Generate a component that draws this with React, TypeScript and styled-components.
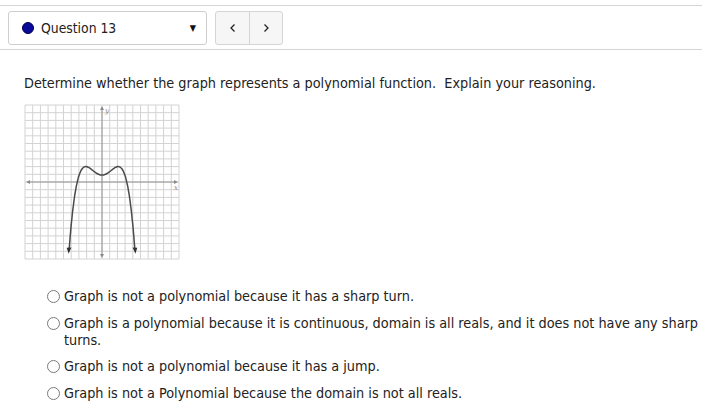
import React from 'react';
import styled, { createGlobalStyle } from 'styled-components';

const GlobalStyle = createGlobalStyle`
  body {
    margin: 0;
    background: #fff;
    font-family: "DejaVu Sans Condensed", "DejaVu Sans", sans-serif;
    color: #222;
  }
`;

const options = [
  'Graph is not a polynomial because it has a sharp turn.',
  'Graph is a polynomial because it is continuous, domain is all reals, and it does not have any sharp turns.',
  'Graph is not a polynomial because it has a jump.',
  'Graph is not a Polynomial because the domain is not all reals.',
];

const Page = styled.div`
  width: 703px;
`;

const Toolbar = styled.div`
  width: 702px;
  margin-top: 5px;
  border-top: 1px solid #d4d4d4;
  border-bottom: 1px solid #d4d4d4;
  padding: 5px 8px 4px;
  box-sizing: border-box;
  display: flex;
  align-items: center;
  gap: 8px;
`;

const Select = styled.div`
  width: 199px;
  height: 34px;
  box-sizing: border-box;
  border: 1px solid #cfcfcf;
  border-radius: 3px;
  background: #fff;
  display: flex;
  align-items: center;
  padding: 0 10px 0 13px;
  font-size: 13.8px;
`;

const Dot = styled.span`
  width: 10px;
  height: 10px;
  border-radius: 50%;
  background: #0a0a9a;
  border: 1px solid #000050;
  margin-right: 7px;
`;

const SelectLabel = styled.span`
  flex: 1;
`;

const Caret = styled.span`
  font-size: 9px;
  color: #111;
`;

const NavGroup = styled.div`
  display: flex;
  height: 34px;
  box-sizing: border-box;
  border: 1px solid #d4d4d4;
  border-radius: 3px;
  background: #f6f6f6;
  overflow: hidden;
`;

const NavButton = styled.button<{ $first?: boolean }>`
  width: 33px;
  border: none;
  border-left: ${p => (p.$first ? 'none' : '1px solid #d4d4d4')};
  background: transparent;
  padding: 0;
  display: flex;
  align-items: center;
  justify-content: center;
  color: #222;
`;

const Prompt = styled.p`
  margin: 25px 0 0 24px;
  font-size: 14.3px;
  line-height: 17px;
`;

const GraphBox = styled.div`
  margin: 12px 0 0 24px;
  width: 156px;
  height: 156px;
`;

const OptionList = styled.div`
  margin: 28px 0 0 47px;
  width: 655px;
  display: flex;
  flex-direction: column;
  gap: 9.6px;
`;

const Option = styled.label`
  display: flex;
  align-items: flex-start;
  font-size: 14.3px;
  line-height: 17px;
`;

const Radio = styled.span`
  flex: none;
  width: 13px;
  height: 13px;
  box-sizing: border-box;
  border: 1px solid #7a7a7a;
  border-radius: 50%;
  background: #fff;
  margin: 2px 4px 0 0;
`;

const Chevron = ({ dir }: { dir: 'left' | 'right' }) => (
  <svg width="8" height="10" viewBox="0 0 8 10">
    <path
      d={dir === 'left' ? 'M5.5 1.5 L2 5 L5.5 8.5' : 'M2.5 1.5 L6 5 L2.5 8.5'}
      fill="none"
      stroke="#222"
      strokeWidth="1.3"
    />
  </svg>
);

const Graph = () => {
  const s = 7.7;
  const c = 78;
  const ticks = Array.from({ length: 21 }, (_, i) => c + (i - 10) * s);
  const f = (x: number) => 0.9 + 0.499 * x * x - 0.0566 * x ** 4;
  const pts: string[] = [];
  for (let x = -4.26; x <= 4.2601; x += 0.06) {
    pts.push(`${(c + x * s).toFixed(1)},${(c - f(x) * s).toFixed(1)}`);
  }
  const lx = c - 4.26 * s;
  const rx = c + 4.26 * s;
  const by = c - f(4.26) * s;
  return (
    <svg width="156" height="156" viewBox="0 0 156 156">
      <rect x="0" y="0" width="156" height="156" fill="#fff" />
      {ticks.map(t => (
        <g key={t}>
          <line x1={t} y1={1} x2={t} y2={155} stroke="#d3d3d3" strokeWidth="1" />
          <line x1={1} y1={t} x2={155} y2={t} stroke="#d3d3d3" strokeWidth="1" />
        </g>
      ))}
      <line x1={4} y1={c} x2={152} y2={c} stroke="#8a8a8a" strokeWidth="0.9" />
      <line x1={c} y1={4} x2={c} y2={152} stroke="#8a8a8a" strokeWidth="0.9" />
      <path d={`M2 ${c} L6 ${c - 2} L6 ${c + 2} Z`} fill="#8a8a8a" />
      <path d={`M154 ${c} L150 ${c - 2} L150 ${c + 2} Z`} fill="#8a8a8a" />
      <path d={`M${c} 2 L${c - 2} 6 L${c + 2} 6 Z`} fill="#8a8a8a" />
      <path d={`M${c} 154 L${c - 2} 150 L${c + 2} 150 Z`} fill="#8a8a8a" />
      <text x={c + 3} y={9} fontSize="7" fontStyle="italic" fill="#888" fontFamily="DejaVu Serif, serif">y</text>
      <text x={150} y={c + 8} fontSize="7" fontStyle="italic" fill="#888" fontFamily="DejaVu Serif, serif">x</text>
      <polyline points={pts.join(' ')} fill="none" stroke="#4a4a4a" strokeWidth="1.5" />
      <path d={`M${lx - 2.5} ${by - 1} L${lx + 2.2} ${by - 1.4} L${lx - 0.6} ${by + 5} Z`} fill="#333" />
      <path d={`M${rx + 2.5} ${by - 1} L${rx - 2.2} ${by - 1.4} L${rx + 0.6} ${by + 5} Z`} fill="#333" />
    </svg>
  );
};

export default function App() {
  return (
    <Page>
      <GlobalStyle />
      <Toolbar>
        <Select>
          <Dot />
          <SelectLabel>Question 13</SelectLabel>
          <Caret>▼</Caret>
        </Select>
        <NavGroup>
          <NavButton $first>
            <Chevron dir="left" />
          </NavButton>
          <NavButton>
            <Chevron dir="right" />
          </NavButton>
        </NavGroup>
      </Toolbar>
      <Prompt>Determine whether the graph represents a polynomial function.&nbsp; Explain your reasoning.</Prompt>
      <GraphBox>
        <Graph />
      </GraphBox>
      <OptionList>
        {options.map(o => (
          <Option key={o}>
            <Radio />
            <span>{o}</span>
          </Option>
        ))}
      </OptionList>
    </Page>
  );
}
